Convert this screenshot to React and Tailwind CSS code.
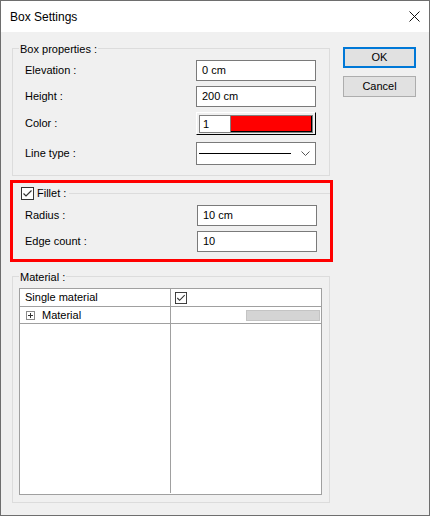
import React from "react";

const Check = ({ size = 13 }) => (
  <svg width={size} height={size} viewBox="0 0 13 13" className="shrink-0">
    <rect x="0.5" y="0.5" width="12" height="12" fill="#fff" stroke="#333" />
    <polyline
      points="2.5,6.5 5,9 10.5,3.5"
      fill="none"
      stroke="#333"
      strokeWidth="1.2"
    />
  </svg>
);

const Field = ({ value }) => (
  <div className="w-[120px] h-[21px] border border-[#7a7a7a] bg-white flex items-center pl-[5px]">
    {value}
  </div>
);

const Row = ({ label, children, className = "" }) => (
  <div className={`flex items-center justify-between ${className}`}>
    <span>{label}</span>
    {children}
  </div>
);

const Group = ({ title, className = "", children }) => (
  <div className={`relative border border-[#dcdcdc] ${className}`}>
    <span className="absolute top-[-7px] left-[6px] px-[1px] leading-[14px] bg-[#f0f0f0]">
      {title}
    </span>
    {children}
  </div>
);

export default function App() {
  return (
    <div className="w-[430px] h-[516px] border border-[#6e6e6e] bg-[#f0f0f0] flex flex-col font-['Liberation_Sans',Arial,sans-serif] text-[11px] text-black">
      {/* title bar */}
      <div className="h-[31px] bg-white flex items-center justify-between pl-[9px] pr-[9px]">
        <span className="text-[12px]">Box Settings</span>
        <svg width="11" height="11" viewBox="0 0 11 11">
          <path d="M0.5 0.5 L10.5 10.5 M10.5 0.5 L0.5 10.5" stroke="#111" strokeWidth="1" />
        </svg>
      </div>

      <div className="flex-1 flex pl-[11px] pr-[12px]">
        {/* left column */}
        <div className="w-[318px] flex flex-col pt-[16px] pb-[12px]">
          <Group title="Box properties :" className="pt-[11px] pb-[10px] pl-[12px] pr-[13px]">
            <Row label="Elevation :">
              <Field value="0 cm" />
            </Row>
            <Row label="Height :" className="mt-[5px]">
              <Field value="200 cm" />
            </Row>
            <Row label="Color :" className="mt-[5px]">
              <div className="w-[120px] h-[23px] border border-t-white border-l-white border-r-black border-b-black p-[2px] pb-[1px] flex">
                <div className="flex-1 flex border border-[#808080]">
                  <div className="w-[31px] bg-white border-r border-[#808080] flex items-center pl-[3px]">
                    1
                  </div>
                  <div className="flex-1 bg-[#ff0000] border-r border-b border-black" />
                </div>
              </div>
            </Row>
            <Row label="Line type :" className="mt-[7px]">
              <div className="w-[120px] h-[23px] border border-[#7a7a7a] bg-white flex items-center pl-[2px] pr-[5px]">
                <div className="w-[92px] h-px bg-black" />
                <svg width="9" height="6" viewBox="0 0 9 6" className="ml-auto">
                  <polyline points="0.5,0.5 4.5,4.5 8.5,0.5" fill="none" stroke="#555" />
                </svg>
              </div>
            </Row>
          </Group>

          {/* fillet (highlighted) */}
          <div className="mt-[4px] -ml-[2px] w-[323px] border-[3px] border-[#ff0000] pt-[4px] pb-[7px]">
            <div className="flex items-center h-[13px] pl-[8px]">
              <Check />
              <span className="ml-[3px]">Fillet :</span>
              <div className="flex-1 h-px bg-[#dcdcdc] ml-[3px]" />
            </div>
            <Row label="Radius :" className="mt-[5px] pl-[12px] pr-[13px]">
              <Field value="10 cm" />
            </Row>
            <Row label="Edge count :" className="mt-[5px] pl-[12px] pr-[13px]">
              <Field value="10" />
            </Row>
          </div>

          <Group title="Material :" className="mt-[14px] flex-1 flex flex-col pt-[11px] pl-[6px] pr-[7px] pb-[7px]">
            <div className="flex-1 flex flex-col border border-[#a0a0a0] bg-white">
              <div className="h-[18px] flex border-b border-[#a0a0a0]">
                <div className="w-[151px] border-r border-[#a0a0a0] flex items-center pl-[5px]">
                  Single material
                </div>
                <div className="flex-1 flex items-center pl-[4px]">
                  <Check size={12} />
                </div>
              </div>
              <div className="h-[17px] flex border-b border-[#a0a0a0]">
                <div className="w-[151px] border-r border-[#a0a0a0] flex items-center pl-[6px]">
                  <svg width="9" height="9" viewBox="0 0 9 9" className="shrink-0">
                    <rect x="0.5" y="0.5" width="8" height="8" fill="#fff" stroke="#8a8a8a" />
                    <path d="M2 4.5 H7 M4.5 2 V7" stroke="#333" />
                  </svg>
                  <span className="ml-[7px]">Material</span>
                </div>
                <div className="flex-1 flex items-center justify-end pr-[1px]">
                  <div className="w-[74px] h-[11px] bg-[#d4d4d4] border border-[#c4c4c4]" />
                </div>
              </div>
              <div className="flex-1 flex mb-[1px]">
                <div className="w-[151px] border-r border-[#a0a0a0]" />
              </div>
            </div>
          </Group>
        </div>

        {/* buttons */}
        <div className="ml-[13px] pt-[15px] flex flex-col">
          <button className="w-[73px] h-[21px] border-2 border-[#0078d7] bg-[#e1e1e1] flex items-center justify-center">
            OK
          </button>
          <button className="mt-[8px] w-[73px] h-[21px] border border-[#adadad] bg-[#e1e1e1] flex items-center justify-center">
            Cancel
          </button>
        </div>
      </div>
    </div>
  );
}
